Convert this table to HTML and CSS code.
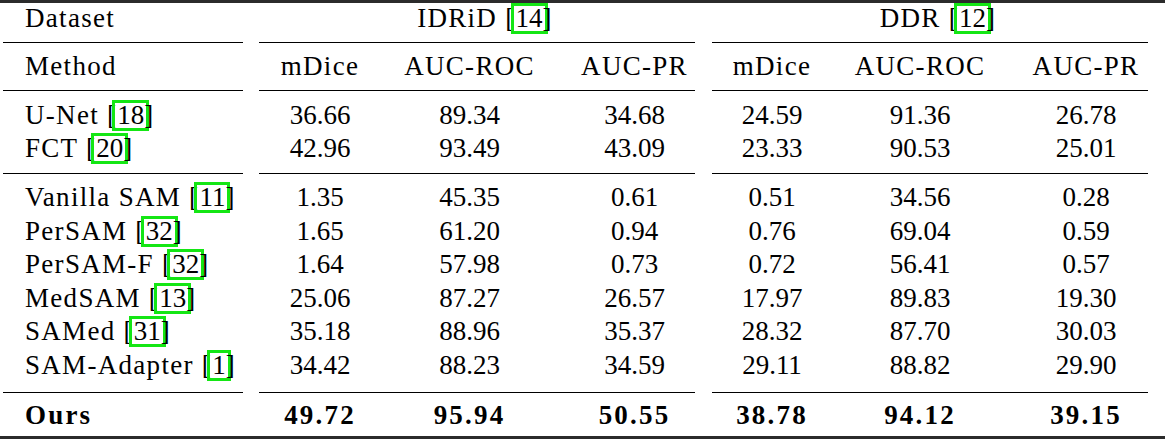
FILE: index.html
```html
<!DOCTYPE html>
<html lang="en">
<head>
    <meta charset="UTF-8">
    <title>Segmentation results</title>
    <link rel="stylesheet" href="styles.css">
</head>
<body>
    <div class="table">
        <div class="rule-thick"></div>

        <div class="row head-top">
            <div class="cell label">Dataset</div>
            <div class="cell group">IDRiD [<span class="cite">14</span>]</div>
            <div class="cell group">DDR [<span class="cite">12</span>]</div>
        </div>
        <div class="row rules">
            <div class="seg seg-first"></div><div class="seg seg-group"></div><div class="seg seg-group seg-last"></div>
        </div>

        <div class="row head-cols">
            <div class="cell label">Method</div>
            <div class="cell name">mDice</div>
            <div class="cell name">AUC-ROC</div>
            <div class="cell name">AUC-PR</div>
            <div class="cell name">mDice</div>
            <div class="cell name">AUC-ROC</div>
            <div class="cell name">AUC-PR</div>
        </div>
        <div class="row rules">
            <div class="seg seg-first"></div><div class="seg seg-group"></div><div class="seg seg-group seg-last"></div>
        </div>

        <div class="section sec-base">
            <div class="row line">
                <div class="cell label">U-Net [<span class="cite">18</span>]</div>
                <div class="cell num">36.66</div><div class="cell num">89.34</div><div class="cell num">34.68</div>
                <div class="cell num">24.59</div><div class="cell num">91.36</div><div class="cell num">26.78</div>
            </div>
            <div class="row line">
                <div class="cell label">FCT [<span class="cite">20</span>]</div>
                <div class="cell num">42.96</div><div class="cell num">93.49</div><div class="cell num">43.09</div>
                <div class="cell num">23.33</div><div class="cell num">90.53</div><div class="cell num">25.01</div>
            </div>
        </div>
        <div class="row rules">
            <div class="seg seg-first"></div><div class="seg seg-group"></div><div class="seg seg-group seg-last"></div>
        </div>

        <div class="section sec-sam">
            <div class="row line">
                <div class="cell label">Vanilla SAM [<span class="cite">11</span>]</div>
                <div class="cell num">1.35</div><div class="cell num">45.35</div><div class="cell num">0.61</div>
                <div class="cell num">0.51</div><div class="cell num">34.56</div><div class="cell num">0.28</div>
            </div>
            <div class="row line">
                <div class="cell label">PerSAM [<span class="cite">32</span>]</div>
                <div class="cell num">1.65</div><div class="cell num">61.20</div><div class="cell num">0.94</div>
                <div class="cell num">0.76</div><div class="cell num">69.04</div><div class="cell num">0.59</div>
            </div>
            <div class="row line">
                <div class="cell label">PerSAM-F [<span class="cite">32</span>]</div>
                <div class="cell num">1.64</div><div class="cell num">57.98</div><div class="cell num">0.73</div>
                <div class="cell num">0.72</div><div class="cell num">56.41</div><div class="cell num">0.57</div>
            </div>
            <div class="row line">
                <div class="cell label">MedSAM [<span class="cite">13</span>]</div>
                <div class="cell num">25.06</div><div class="cell num">87.27</div><div class="cell num">26.57</div>
                <div class="cell num">17.97</div><div class="cell num">89.83</div><div class="cell num">19.30</div>
            </div>
            <div class="row line">
                <div class="cell label">SAMed [<span class="cite">31</span>]</div>
                <div class="cell num">35.18</div><div class="cell num">88.96</div><div class="cell num">35.37</div>
                <div class="cell num">28.32</div><div class="cell num">87.70</div><div class="cell num">30.03</div>
            </div>
            <div class="row line">
                <div class="cell label">SAM-Adapter [<span class="cite">1</span>]</div>
                <div class="cell num">34.42</div><div class="cell num">88.23</div><div class="cell num">34.59</div>
                <div class="cell num">29.11</div><div class="cell num">88.82</div><div class="cell num">29.90</div>
            </div>
        </div>
        <div class="row rules">
            <div class="seg seg-first"></div><div class="seg seg-group"></div><div class="seg seg-group seg-last"></div>
        </div>

        <div class="section sec-ours">
            <div class="row line best">
                <div class="cell label">Ours</div>
                <div class="cell num">49.72</div><div class="cell num">95.94</div><div class="cell num">50.55</div>
                <div class="cell num">38.78</div><div class="cell num">94.12</div><div class="cell num">39.15</div>
            </div>
        </div>

        <div class="rule-thick"></div>
    </div>
</body>
</html>
```

FILE: styles.css
```css
body {
    margin: 0;
    background-color: #fff;
    color: #000;
    font-family: "Liberation Serif", "Times New Roman", serif;
    font-size: 27px;
}
.table {
    width: 1165px;
}
.rule-thick {
    height: 3px;
    background-color: #2b2b2b;
}
.row {
    display: grid;
    grid-template-columns: 259px 122px 177px 153px 122px 174px 158px;
}
.cell {
    white-space: nowrap;
}
.label {
    padding-left: 25px;
    letter-spacing: 1.3px;
}
.group {
    grid-column: span 3;
    text-align: center;
    letter-spacing: 1.3px;
}
.name {
    text-align: center;
    letter-spacing: 1.3px;
}
.num {
    text-align: center;
}
.head-top {
    line-height: 31px;
    padding-bottom: 8px;
}
.head-cols {
    line-height: 33px;
    padding: 7px 0;
}
.rules {
    height: 1px;
}
.seg {
    height: 1px;
    background-color: #000;
}
.seg-first {
    margin: 0 16px 0 3px;
}
.seg-group {
    grid-column: span 3;
    margin: 0 16px 0 0;
}
.seg-last {
    margin: 0 17px 0 1px;
}
.section .line {
    line-height: 33px;
}
.sec-base {
    padding: 8px 0;
}
.sec-sam {
    padding: 7px 0 10px;
}
.sec-sam .line {
    line-height: 33.5px;
}
.sec-ours {
    padding: 6px 0 4px;
}
.best .cell {
    font-weight: bold;
    letter-spacing: 2.2px;
}
.cite {
    display: inline-block;
    line-height: 25px;
    padding: 0 2px;
    margin: 0 -5px 0 -5px;
    border: 3px solid #14e614;
    letter-spacing: 0;
}
```
